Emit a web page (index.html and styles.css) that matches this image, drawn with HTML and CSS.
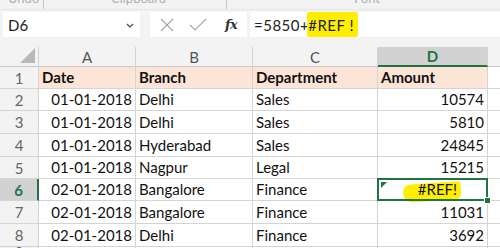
FILE: index.html
```html
<!DOCTYPE html>
<html>
<head>
<meta charset="utf-8">
<link rel="stylesheet" href="styles.css">
</head>
<body>
<div class="app">
  <div class="ribbon">
    <span class="rb rb-undo">Undo</span>
    <span class="rb-div rb-div1"></span>
    <span class="rb rb-clip">Clipboard</span>
    <span class="rb-div rb-div2"></span>
    <span class="rb rb-font">Font</span>
  </div>
  <div class="fbar">
    <div class="namebox">
      <span class="nb-text">D6</span>
      <svg class="chev" width="8" height="5" viewBox="0 0 8 5"><path d="M1 1 L4 4 L7 1" fill="none" stroke="#444" stroke-width="1.2"/></svg>
    </div>
    <div class="iconbox">
      <svg class="ic" width="16" height="16" viewBox="0 0 16 16"><path d="M2 2 L14 14 M14 2 L2 14" stroke="#a6a6a6" stroke-width="1.1" fill="none"/></svg>
      <svg class="ic" width="20" height="16" viewBox="0 0 20 16"><path d="M2 8 L7 13 L18 2" stroke="#a6a6a6" stroke-width="1.1" fill="none"/></svg>
      <span class="fx">fx</span>
    </div>
    <div class="formula">
      <span class="f-plain">=5850+</span><span class="f-hl">#REF !</span>
    </div>
  </div>
  <div class="sheet">
    <div class="corner"><span class="tri"></span></div>
    <div class="ch">A</div>
    <div class="ch">B</div>
    <div class="ch">C</div>
    <div class="ch ch-sel">D</div>
    <div class="ch ch-e"></div>

    <div class="rh r1">1</div>
    <div class="c hd">Date</div>
    <div class="c hd">Branch</div>
    <div class="c hd">Department</div>
    <div class="c hd">Amount</div>
    <div class="c e"></div>

    <div class="rh r2">2</div>
    <div class="c num">01-01-2018</div>
    <div class="c">Delhi</div>
    <div class="c">Sales</div>
    <div class="c num">10574</div>
    <div class="c e"></div>

    <div class="rh">3</div>
    <div class="c num">01-01-2018</div>
    <div class="c">Delhi</div>
    <div class="c">Sales</div>
    <div class="c num">5810</div>
    <div class="c e"></div>

    <div class="rh">4</div>
    <div class="c num">01-01-2018</div>
    <div class="c">Hyderabad</div>
    <div class="c">Sales</div>
    <div class="c num">24845</div>
    <div class="c e"></div>

    <div class="rh">5</div>
    <div class="c num">01-01-2018</div>
    <div class="c">Nagpur</div>
    <div class="c">Legal</div>
    <div class="c num">15215</div>
    <div class="c e"></div>

    <div class="rh rh-sel">6</div>
    <div class="c num">02-01-2018</div>
    <div class="c">Bangalore</div>
    <div class="c">Finance</div>
    <div class="c err"><span class="blob"></span><span class="errtxt">#REF!</span><span class="sel-box"></span><span class="flag"></span><span class="handle"></span></div>
    <div class="c e"></div>

    <div class="rh">7</div>
    <div class="c num">02-01-2018</div>
    <div class="c">Bangalore</div>
    <div class="c">Finance</div>
    <div class="c num">11031</div>
    <div class="c e"></div>

    <div class="rh">8</div>
    <div class="c num">02-01-2018</div>
    <div class="c">Delhi</div>
    <div class="c">Finance</div>
    <div class="c num">3692</div>
    <div class="c e"></div>

    <div class="rh">9</div>
    <div class="c"></div>
    <div class="c"></div>
    <div class="c"></div>
    <div class="c"></div>
    <div class="c e"></div>
  </div>
</div>
</body>
</html>
```

FILE: styles.css
```css
html, body {
  margin: 0;
  padding: 0;
  width: 500px;
  height: 248px;
  overflow: hidden;
  background: #f3f3f3;
  font-family: "Lato", "Open Sans", sans-serif;
}
.app {
  width: 500px;
  height: 248px;
  overflow: hidden;
}
.ribbon {
  position: relative;
  height: 9px;
  overflow: hidden;
  background: #f3f3f3;
  border-bottom: 1px solid #e6e6e6;
  font-size: 13px;
  color: #b0b0b0;
}
.rb {
  position: absolute;
  top: -10px;
  line-height: 16px;
}
.rb-undo { left: 8px; }
.rb-clip { left: 111px; }
.rb-font { left: 354px; }
.rb-div {
  position: absolute;
  top: 0;
  width: 1px;
  height: 9px;
  background: #c8c8c8;
}
.rb-div1 { left: 43px; }
.rb-div2 { left: 226px; }

.fbar {
  display: flex;
  align-items: stretch;
  height: 25px;
  margin-top: 2px;
  padding-left: 3px;
}
.namebox {
  width: 137px;
  background: #fff;
  display: flex;
  align-items: center;
  justify-content: space-between;
  padding: 0 6px 0 5px;
  box-sizing: border-box;
}
.nb-text {
  font-size: 15px;
  color: #222;
}
.chev { margin-top: 1px; }
.iconbox {
  margin-left: 10px;
  width: 97px;
  background: #fff;
  display: flex;
  align-items: center;
  padding-left: 9px;
  box-sizing: border-box;
}
.iconbox .ic:nth-child(2) { margin-left: 13px; }
.fx {
  margin-left: 17px;
  font-family: "DejaVu Serif", "Liberation Serif", serif;
  font-style: italic;
  font-weight: bold;
  font-size: 13px;
  color: #333;
  letter-spacing: -0.5px;
}
.formula {
  margin-left: 3px;
  flex: 1;
  background: #fff;
  display: flex;
  align-items: center;
  padding-left: 4px;
  font-size: 15px;
  color: #222;
  letter-spacing: 0.5px;
}
.f-hl {
  background: #ffee00;
  padding: 4px 4px 3px 1px;
  margin-left: -2px;
  border-radius: 2px;
}

.sheet {
  margin-top: 10px;
  display: grid;
  grid-template-columns: 39px 97px 117px 125px 110px 12px;
  grid-template-rows: 20px 22px 22px 23px 23px 22px 22px 23px 23px 10px;
  font-size: 15px;
  color: #111;
  background: #fff;
}
.corner {
  background: #f3f3f3;
  border-right: 1px solid #d4d4d4;
  border-bottom: 1px solid #c8c8c8;
  position: relative;
}
.tri {
  position: absolute;
  right: 3px;
  bottom: 3px;
  width: 0;
  height: 0;
  border-left: 15px solid transparent;
  border-bottom: 15px solid #b8b8b8;
}
.ch {
  background: #f3f3f3;
  border-right: 1px solid #d4d4d4;
  border-bottom: 1px solid #c8c8c8;
  display: flex;
  align-items: center;
  justify-content: center;
  font-size: 15px;
  color: #555;
}
.ch-sel {
  background: #d2d2d2;
  color: #217346;
  font-weight: bold;
  border-bottom: 2px solid #217346;
}
.ch-e { border-right: none; }
.rh {
  background: #f3f3f3;
  border-right: 1px solid #d4d4d4;
  border-bottom: 1px solid #d4d4d4;
  display: flex;
  align-items: center;
  justify-content: center;
  color: #666;
  font-size: 15px;
}
.rh-sel {
  background: #d2d2d2;
  color: #217346;
  font-weight: bold;
  border-right: 2px solid #217346;
}
.c {
  border-right: 1px solid #d4d4d4;
  border-bottom: 1px solid #d4d4d4;
  display: flex;
  align-items: flex-end;
  padding: 0 3px 2px 3px;
  white-space: nowrap;
  overflow: visible;
  box-sizing: border-box;
}
.hd {
  background: #fce4d6;
  font-weight: bold;
}
.num { justify-content: flex-end; }
.e { border-right: none; }
.err {
  position: relative;
  justify-content: center;
}
.blob {
  position: absolute;
  left: 25px;
  top: 4px;
  width: 58px;
  height: 18px;
  background: #ffee00;
  border-radius: 8px 3px 6px 10px;
  transform: rotate(-4deg);
}
.errtxt {
  position: relative;
  margin-left: 10px;
}
.sel-box {
  position: absolute;
  left: -1px;
  top: -1px;
  right: -1px;
  bottom: -1px;
  border: 2px solid #217346;
}
.flag {
  position: absolute;
  left: 3px;
  top: 3px;
  width: 0;
  height: 0;
  border-top: 6px solid #217346;
  border-right: 6px solid transparent;
}
.handle {
  position: absolute;
  right: -4px;
  bottom: -4px;
  width: 5px;
  height: 5px;
  background: #217346;
  border: 1px solid #fff;
}
```
